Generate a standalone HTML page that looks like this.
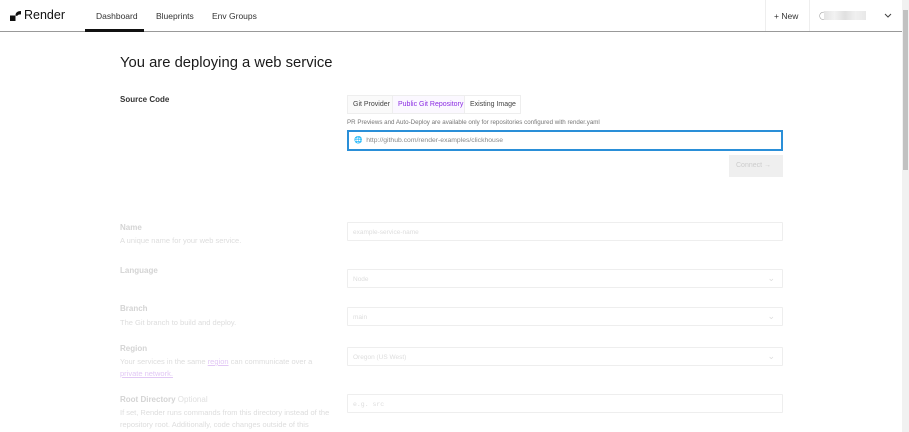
<!DOCTYPE html>
<html><head><style>
*{box-sizing:border-box;margin:0;padding:0}
body{width:909px;height:432px;overflow:hidden;background:#fff;font-family:"Liberation Sans",sans-serif;position:relative;color:#222}
.a{position:absolute;white-space:nowrap}
.hdr{position:absolute;left:0;top:0;width:902px;height:32px;border-bottom:1px solid #999;background:#fff}
.nav{font-size:8.5px;color:#333}
.lbl{font-size:8px;color:#d4d4d4;font-weight:bold}
.desc{font-size:7.5px;color:#ddd}
.inp{position:absolute;left:347px;width:436px;height:19px;border:1px solid #eee;font-size:6.5px;color:#ddd;padding:6px 5px;border-radius:1px}
.chev{position:absolute;right:7px;top:3px;font-size:9px;color:#ddd}
</style></head><body>
<div class="hdr">
 <svg class="a" style="left:10px;top:11px" width="11" height="10" viewBox="0 0 10 9"><path d="M0 4h5v5H0z M5 4 C5 1.5 7 0 10 0V3C8 3 7 3.5 6.5 4.5Z" fill="#111"/></svg>
 <div class="a" style="left:24px;top:8px;font-size:12.5px;color:#111">Render</div>
 <div class="a nav" style="left:96px;top:11px">Dashboard</div>
 <div class="a" style="left:85px;top:29px;width:59px;height:3px;background:#111"></div>
 <div class="a nav" style="left:156px;top:11px">Blueprints</div>
 <div class="a nav" style="left:212px;top:11px">Env Groups</div>
 <div class="a" style="left:765px;top:0;width:1px;height:31px;background:#eee"></div>
 <div class="a nav" style="left:774px;top:11px">+ New</div>
 <div class="a" style="left:809px;top:0;width:1px;height:31px;background:#eee"></div>
 <div class="a" style="left:819px;top:11px;font-size:8px;color:#999">&#9711;</div>
 <div class="a" style="left:824px;top:11px;width:42px;height:9px;background:linear-gradient(90deg,#e4e4e4,#f2f2f2,#e0e0e0,#f0f0f0,#e8e8e8)"></div>
 <svg class="a" style="left:884px;top:13px" width="8" height="5" viewBox="0 0 8 5"><path d="M1 1l3 3 3-3" stroke="#444" fill="none" stroke-width="1"/></svg>
</div>
<div class="a" style="left:902px;top:0;width:7px;height:432px;background:#f1f1f1"></div>
<div class="a" style="left:903px;top:10px;width:5px;height:160px;background:#c1c1c1"></div>
<div class="a" style="left:120px;top:55px;font-size:14.8px;color:#1a1a1a">You are deploying a web service</div>
<div class="a" style="left:120px;top:95px;font-size:8px;font-weight:bold;color:#333">Source Code</div>
<div class="a" style="left:347px;top:95px;width:174px;height:19px;border:1px solid #eee;display:flex;font-size:7px;color:#444">
 <div style="width:45px;padding:5px 0 0 5px;background:#fafafa;border-right:1px solid #eee">Git Provider</div>
 <div style="width:72px;padding:5px 0 0 5px;color:#8a2be2;background:#fbf8ff;border-right:1px solid #eee">Public Git Repository</div>
 <div style="padding:5px 0 0 5px">Existing Image</div>
</div>
<div class="a" style="left:347px;top:119px;font-size:6.2px;color:#777">PR Previews and Auto-Deploy are available only for repositories configured with render.yaml</div>
<div class="a" style="left:347px;top:130px;width:436px;height:21px;border:2px solid #2a8fd8;font-size:6.8px;color:#888;padding:4px 0 0 5px">&#127760;&nbsp; http://github.com/render-examples/clickhouse</div>
<div class="a" style="left:729px;top:155px;width:54px;height:22px;background:#efefef;font-size:7px;color:#ccc;padding:7px 0 0 7px">Connect →</div>

<div class="a lbl" style="left:120px;top:223px">Name</div>
<div class="a desc" style="left:120px;top:236px">A unique name for your web service.</div>
<div class="inp" style="top:222px">example-service-name</div>
<div class="a lbl" style="left:120px;top:266px">Language</div>
<div class="inp" style="top:269px">Node<span class="chev">&#8964;</span></div>
<div class="a lbl" style="left:120px;top:304px">Branch</div>
<div class="a desc" style="left:120px;top:318px">The Git branch to build and deploy.</div>
<div class="inp" style="top:307px">main<span class="chev">&#8964;</span></div>
<div class="a lbl" style="left:120px;top:344px">Region</div>
<div class="a desc" style="left:120px;top:357px">Your services in the same <u style="color:#e2c8f5">region</u> can communicate over a</div>
<div class="a desc" style="left:120px;top:369px"><u style="color:#e2c8f5">private network.</u></div>
<div class="inp" style="top:347px">Oregon (US West)<span class="chev">&#8964;</span></div>
<div class="a lbl" style="left:120px;top:395px">Root Directory <span style="font-weight:normal;color:#e0e0e0">Optional</span></div>
<div class="a desc" style="left:120px;top:408px">If set, Render runs commands from this directory instead of the</div>
<div class="a desc" style="left:120px;top:420px">repository root. Additionally, code changes outside of this</div>
<div class="inp" style="top:394px;font-family:'Liberation Mono',monospace">e.g. src</div>
</body></html>
